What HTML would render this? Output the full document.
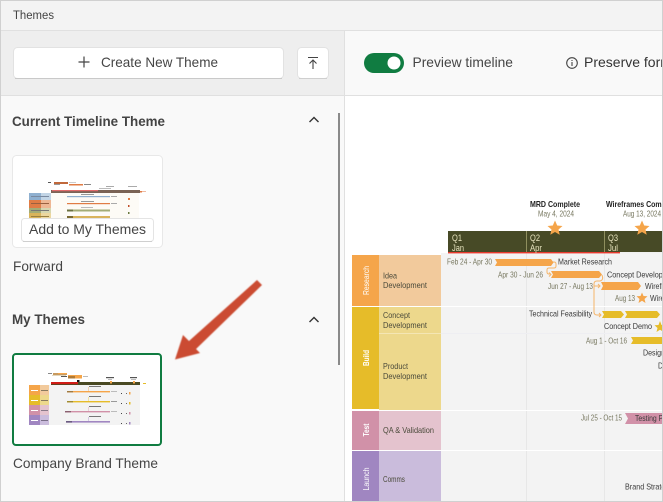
<!DOCTYPE html>
<html><head><meta charset="utf-8"><title>Themes</title>
<style>
html,body{margin:0;padding:0;background:#fff;overflow:hidden}
svg{display:block}
text{font-family:"Liberation Sans",sans-serif}
.u{font-size:14px;fill:#454545}
.h{font-size:14px;font-weight:bold;fill:#444}
.s{font-size:8.5px;fill:#4a4a3a}
.d{font-size:8px;fill:#77775f}
.t{font-size:8.5px;fill:#3a3a3a}
.w{font-size:8.5px;fill:#fff}
.q{font-size:9.5px;fill:#e6e3bd}
.gt text{filter:url(#tb)}
</style></head>
<body>
<svg xmlns="http://www.w3.org/2000/svg" width="663" height="502" viewBox="0 0 663 502">
<defs>
<filter id="b" x="-10%" y="-10%" width="120%" height="120%"><feGaussianBlur stdDeviation="0.4"/></filter>
<filter id="tb" x="-5%" y="-20%" width="110%" height="140%"><feGaussianBlur stdDeviation="0.22"/></filter>
<filter id="th" x="-2%" y="-2%" width="104%" height="104%"><feGaussianBlur stdDeviation="0.3"/></filter>
<clipPath id="c"><rect x="345" y="31" width="317" height="470"/></clipPath>
</defs>
<!-- panels -->
<rect width="663" height="502" fill="#fff"/>
<rect x="0" y="0" width="663" height="31" fill="#f3f3f3"/>
<rect x="0" y="31" width="345" height="64" fill="#eeeeee"/>
<rect x="0" y="96" width="345" height="406" fill="#f9f9f9"/>
<rect x="345" y="31" width="318" height="64" fill="#f9f9f9"/>
<rect x="0" y="30" width="663" height="1" fill="#e0e0e0"/>
<rect x="0" y="95" width="663" height="1" fill="#e0e0e0"/>
<rect x="344" y="31" width="1" height="471" fill="#e0e0e0"/>
<text x="13" y="19" style="font-size:11.5px;fill:#444" textLength="41" lengthAdjust="spacingAndGlyphs">Themes</text>
<!-- buttons -->
<rect x="13.5" y="47.5" width="270" height="31" rx="4" fill="#fff" stroke="#e2e2e2"/>
<path d="M15 78.5H282" stroke="#c9c9c9"/>
<path d="M84 56.5V67.5M78.5 62H89.5" stroke="#444" stroke-width="1.2" fill="none"/>
<text x="101" y="67" class="u" textLength="117" lengthAdjust="spacingAndGlyphs">Create New Theme</text>
<rect x="297.5" y="47.5" width="31" height="31" rx="4" fill="#fff" stroke="#e2e2e2"/>
<path d="M299 78.5H327" stroke="#cfcfcf"/>
<path d="M308 57.5H318M313 69V60.5M309.5 63.5L313 60L316.5 63.5" stroke="#444" stroke-width="1.1" fill="none"/>
<!-- left -->
<text x="12" y="126" class="h" textLength="153" lengthAdjust="spacingAndGlyphs">Current Timeline Theme</text>
<path d="M309.5 122L314 117.5L318.5 122" stroke="#333" stroke-width="1.4" fill="none"/>
<rect x="338" y="113" width="2" height="252" fill="#8a8a8a"/>
<!-- card 1 -->
<rect x="12.5" y="155.5" width="150" height="92" rx="4" fill="#fff" stroke="#e8e8e8"/>
<g filter="url(#th)">
<rect x="48" y="182" width="3" height="1" fill="#555"/>
<rect x="54" y="182" width="14" height="2" fill="#c0673a"/>
<rect x="69" y="182" width="7" height="1" fill="#ccc"/>
<rect x="54" y="184" width="6" height="1" fill="#999"/>
<rect x="69" y="184" width="14" height="1.5" fill="#e07b45"/>
<rect x="84" y="184" width="7" height="1" fill="#888"/>
<rect x="106" y="186" width="8" height="1" fill="#aaa"/>
<rect x="128" y="186" width="9" height="1" fill="#aaa"/>
<rect x="99" y="188" width="12" height="1" fill="#bbb"/>
<rect x="51" y="190" width="89" height="3" fill="#7a6355"/>
<rect x="52" y="190" width="46" height="1.2" fill="#e06a6a"/>
<rect x="140" y="191" width="2" height="1.5" fill="#e07b45"/>
<rect x="142" y="191" width="4" height="1" fill="#f0b9a0"/>
<rect x="51" y="193" width="88" height="26" fill="#fdfbf6"/>
<rect x="29" y="193" width="12" height="7" fill="#8fb0d0"/><rect x="41" y="193" width="10" height="7" fill="#c2d5e6"/>
<rect x="29" y="200" width="12" height="8" fill="#e07b45"/><rect x="41" y="200" width="10" height="8" fill="#eeb794"/>
<rect x="29" y="208" width="12" height="5" fill="#a3ac76"/><rect x="41" y="208" width="10" height="5" fill="#d6d6b0"/>
<rect x="29" y="213" width="12" height="6" fill="#d9b45b"/><rect x="41" y="213" width="10" height="6" fill="#ecd79f"/>
<rect x="31" y="196" width="18" height="1" fill="#7a8aa0"/><rect x="31" y="203" width="18" height="1" fill="#9a6040"/><rect x="31" y="210" width="18" height="1" fill="#777"/><rect x="31" y="216" width="18" height="1" fill="#9a8040"/>
<rect x="67" y="196" width="43" height="1.2" fill="#8fb0d0"/><rect x="111" y="196" width="6" height="1" fill="#aaa"/>
<rect x="67" y="203" width="43" height="1.2" fill="#e07b45"/><rect x="111" y="203" width="6" height="1" fill="#aaa"/>
<rect x="67" y="209.5" width="43" height="2" fill="#a3ac76"/><rect x="67" y="209.5" width="6" height="2" fill="#6a7040"/>
<rect x="67" y="216" width="43" height="2" fill="#d9b45b"/><rect x="67" y="216" width="6" height="2" fill="#7a6a30"/>
<rect x="81" y="194" width="13" height="1" fill="#999"/><rect x="81" y="201" width="13" height="1" fill="#999"/><rect x="81" y="207" width="12" height="1" fill="#bbb"/>
<rect x="128" y="198" width="2" height="2" fill="#e07b45"/><rect x="128" y="205" width="1.5" height="2" fill="#c0502a"/><rect x="128" y="212" width="1.5" height="2" fill="#6a7a40"/>
</g>
<rect x="21.5" y="218.5" width="132" height="23" rx="3" fill="#fff" stroke="#e4e4e4"/>
<path d="M23 241.5H152" stroke="#cfcfcf"/>
<text x="29" y="234" class="u" textLength="117" lengthAdjust="spacingAndGlyphs">Add to My Themes</text>
<text x="13" y="271" class="u" textLength="50" lengthAdjust="spacingAndGlyphs">Forward</text>
<text x="12" y="324" class="h" textLength="73" lengthAdjust="spacingAndGlyphs">My Themes</text>
<path d="M309.5 322L314 317.5L318.5 322" stroke="#333" stroke-width="1.4" fill="none"/>
<!-- card 2 -->
<rect x="13" y="354" width="148" height="91" rx="3" fill="#fff" stroke="#107c41" stroke-width="2"/>
<g filter="url(#th)">
<rect x="48" y="373" width="4" height="1" fill="#888"/>
<rect x="53" y="373" width="14" height="2" fill="#c79a60"/>
<rect x="58" y="373" width="9" height="1" fill="#f5a54a"/>
<rect x="52" y="375" width="14" height="1" fill="#e2d6bd"/>
<rect x="61" y="376" width="6" height="1" fill="#555"/>
<rect x="68" y="375" width="14" height="3.5" fill="#f5a54a"/>
<rect x="68" y="376" width="7" height="2.5" fill="#b07a36"/>
<rect x="83" y="376" width="5" height="1" fill="#bbb"/>
<rect x="106" y="377" width="8" height="1.2" fill="#555"/>
<rect x="130" y="377" width="7" height="1.2" fill="#555"/>
<rect x="108" y="379" width="4" height="1" fill="#bbb"/><rect x="131" y="379" width="5" height="1" fill="#bbb"/>
<rect x="77" y="380" width="2.5" height="2" fill="#111"/>
<rect x="51" y="382" width="89" height="3" fill="#4a4a22"/>
<rect x="51" y="382" width="27" height="2.2" fill="#d01c12"/>
<rect x="110" y="381" width="2" height="2.5" fill="#f5a54a"/><rect x="133" y="381" width="2" height="2.5" fill="#f5a54a"/>
<rect x="143" y="383" width="3" height="1" fill="#e6bc29"/>
<rect x="49" y="385" width="91" height="40" fill="#f3f3f3"/>
<rect x="29" y="385" width="11" height="10" fill="#f5a54a"/><rect x="40" y="385" width="9" height="10" fill="#f2ca9c"/>
<rect x="29" y="395" width="11" height="10" fill="#e6bc29"/><rect x="40" y="395" width="9" height="10" fill="#edd88c"/>
<rect x="29" y="405" width="11" height="10" fill="#d191a8"/><rect x="40" y="405" width="9" height="10" fill="#e4c3ce"/>
<rect x="29" y="415" width="11" height="10" fill="#a086c1"/><rect x="40" y="415" width="9" height="10" fill="#cabcdc"/>
<rect x="31" y="390" width="7" height="1" fill="#fff"/><rect x="31" y="400" width="7" height="1" fill="#fff"/><rect x="31" y="410" width="7" height="1" fill="#fff"/><rect x="31" y="420" width="7" height="1" fill="#fff"/>
<rect x="41" y="390" width="7" height="1" fill="#8a7a5e"/><rect x="41" y="400" width="7" height="1" fill="#8a7a5e"/><rect x="41" y="410" width="7" height="1" fill="#8a7a8a"/><rect x="41" y="420" width="7" height="1" fill="#7a6e88"/>
<rect x="67" y="391" width="43" height="1.4" fill="#f5a54a"/><rect x="67" y="391" width="6" height="1.4" fill="#a07a40"/>
<rect x="67" y="401" width="43" height="1.4" fill="#e6bc29"/><rect x="67" y="401" width="6" height="1.4" fill="#a08a30"/>
<rect x="65" y="411" width="45" height="1.4" fill="#d191a8"/><rect x="65" y="411" width="6" height="1.4" fill="#8a6070"/>
<rect x="66" y="421" width="44" height="1.6" fill="#a086c1"/><rect x="66" y="421" width="6" height="1.6" fill="#6a5a80"/>
<rect x="89" y="386" width="12" height="1" fill="#777"/><rect x="89" y="396" width="12" height="1" fill="#777"/><rect x="89" y="406" width="12" height="1" fill="#777"/><rect x="89" y="416" width="12" height="1" fill="#777"/>
<rect x="88" y="387" width="1" height="4" fill="#f2d2b0"/><rect x="88" y="397" width="1" height="4" fill="#f2e2a0"/><rect x="88" y="407" width="1" height="4" fill="#e8cdd8"/><rect x="88" y="417" width="1" height="4" fill="#d4c8e4"/>
<rect x="111" y="391" width="6" height="1" fill="#bbb"/><rect x="111" y="401" width="6" height="1" fill="#999"/><rect x="111" y="411" width="6" height="1" fill="#bbb"/>
<rect x="121" y="393" width="1" height="1" fill="#444"/><rect x="126" y="393" width="1" height="1" fill="#666"/><rect x="129" y="392" width="1.5" height="2.5" fill="#f5a54a"/>
<rect x="121" y="403" width="1" height="1" fill="#444"/><rect x="126" y="403" width="1" height="1" fill="#666"/><rect x="129" y="402" width="1.5" height="2.5" fill="#e6bc29"/>
<rect x="121" y="413" width="1" height="1" fill="#444"/><rect x="126" y="413" width="1" height="1" fill="#666"/><rect x="129" y="412" width="1.5" height="2.5" fill="#d191a8"/>
<rect x="121" y="423" width="1" height="1" fill="#444"/><rect x="126" y="423" width="1" height="1" fill="#666"/><rect x="129" y="422" width="1.5" height="2.5" fill="#a086c1"/>
</g>
<text x="13" y="468" class="u" textLength="145" lengthAdjust="spacingAndGlyphs">Company Brand Theme</text>
<!-- toolbar right -->
<rect x="364" y="53" width="40" height="20" rx="10" fill="#107c41"/>
<circle cx="394" cy="63" r="6.5" fill="#fff"/>
<text x="412.5" y="67" class="u" textLength="100.5" lengthAdjust="spacingAndGlyphs">Preview timeline</text>
<circle cx="572" cy="63" r="5.3" fill="none" stroke="#444" stroke-width="1.1"/>
<path d="M572 62V66M572 60V61" stroke="#444" stroke-width="1.1"/>
<g clip-path="url(#c)" class="gt">
<text x="584" y="67" class="u" style="fill:#333;filter:none">Preserve formatting</text>
<!-- gantt -->
<rect x="441" y="253" width="222" height="248" fill="#f3f3f3"/>
<rect x="526" y="253" width="1" height="248" fill="#e7e7e7"/>
<rect x="604" y="253" width="1" height="248" fill="#e7e7e7"/>
<rect x="441" y="306" width="222" height="1" fill="#fff"/>
<rect x="441" y="333" width="222" height="1" fill="#eeeef2"/>
<rect x="441" y="410" width="222" height="1" fill="#fff"/>
<rect x="441" y="450" width="222" height="1" fill="#fff"/>
<rect x="352" y="255" width="27" height="51" fill="#f5a54a"/><rect x="379" y="255" width="62" height="51" fill="#f2ca9c"/>
<rect x="352" y="307" width="27" height="102" fill="#e6bc29"/><rect x="379" y="307" width="62" height="103" fill="#edd88c"/>
<rect x="379" y="333" width="62" height="1" fill="#f4e6b4"/>
<rect x="352" y="411" width="27" height="39" fill="#d191a8"/><rect x="379" y="411" width="62" height="39" fill="#e4c3ce"/>
<rect x="352" y="451" width="27" height="50" fill="#a086c1"/><rect x="379" y="451" width="62" height="50" fill="#cabcdc"/>
<text class="w" transform="translate(369,295) rotate(-90)" textLength="29" lengthAdjust="spacingAndGlyphs">Research</text>
<text class="w" style="font-weight:bold" transform="translate(369,366) rotate(-90)" textLength="16" lengthAdjust="spacingAndGlyphs">Build</text>
<text class="w" style="font-weight:bold" transform="translate(369,436.5) rotate(-90)" textLength="13" lengthAdjust="spacingAndGlyphs">Test</text>
<text class="w" transform="translate(369,490.5) rotate(-90)" textLength="23" lengthAdjust="spacingAndGlyphs">Launch</text>
<text x="383" y="278.5" class="s" textLength="14" lengthAdjust="spacingAndGlyphs">Idea</text>
<text x="383" y="288" class="s" textLength="44" lengthAdjust="spacingAndGlyphs">Development</text>
<text x="383" y="318" class="s" textLength="27" lengthAdjust="spacingAndGlyphs">Concept</text>
<text x="383" y="328" class="s" textLength="44" lengthAdjust="spacingAndGlyphs">Development</text>
<text x="383" y="369" class="s" textLength="25" lengthAdjust="spacingAndGlyphs">Product</text>
<text x="383" y="379" class="s" textLength="44" lengthAdjust="spacingAndGlyphs">Development</text>
<text x="383" y="433" class="s" textLength="51" lengthAdjust="spacingAndGlyphs">QA &amp; Validation</text>
<text x="383" y="482" class="s" textLength="22" lengthAdjust="spacingAndGlyphs">Comms</text>
<rect x="448" y="231" width="215" height="21" fill="#474a26"/>
<rect x="448" y="252" width="172" height="1.4" fill="#e83a2e"/>
<rect x="620" y="252" width="43" height="1.4" fill="#f0f0f0"/>
<rect x="526" y="231" width="1" height="21" fill="#8f8f5e"/><rect x="604" y="231" width="1" height="21" fill="#8f8f5e"/>
<text x="452" y="241" class="q" textLength="10" lengthAdjust="spacingAndGlyphs">Q1</text><text x="452" y="251" class="q" textLength="12" lengthAdjust="spacingAndGlyphs">Jan</text>
<text x="530" y="241" class="q" textLength="10" lengthAdjust="spacingAndGlyphs">Q2</text><text x="530" y="251" class="q" textLength="12" lengthAdjust="spacingAndGlyphs">Apr</text>
<text x="608" y="241" class="q" textLength="10" lengthAdjust="spacingAndGlyphs">Q3</text><text x="608" y="251" class="q" textLength="10" lengthAdjust="spacingAndGlyphs">Jul</text>
<text x="530" y="207" class="t" style="font-weight:bold;fill:#222" textLength="50" lengthAdjust="spacingAndGlyphs">MRD Complete</text>
<text x="538" y="216.5" class="d" textLength="36" lengthAdjust="spacingAndGlyphs">May 4, 2024</text>
<text x="606" y="207" class="t" style="font-weight:bold;fill:#222" textLength="72" lengthAdjust="spacingAndGlyphs">Wireframes Complete</text>
<text x="623" y="216.5" class="d" textLength="38" lengthAdjust="spacingAndGlyphs">Aug 13, 2024</text>
<polygon points="555,220.5 557.2,225.5 562.5,226 558.5,229.5 559.7,234.7 555,232 550.3,234.7 551.5,229.5 547.5,226 552.8,225.5" fill="#f5a54a"/>
<polygon points="642,220.5 644.2,225.5 649.5,226 645.5,229.5 646.7,234.7 642,232 637.3,234.7 638.5,229.5 634.5,226 639.8,225.5" fill="#f5a54a"/>
<path d="M552 262H554Q556 262 556 264V266Q556 268 554 268H549Q547 268 547 270V272Q547 274 549 274H551M549 272.5L551 274.5L549 276.5" fill="none" stroke="#f5b56a" stroke-width="1"/>
<path d="M602 275Q604 280 600 281H597Q594 281 594 284V312Q594 315 597 315H601M594 286H600M598 284L600 286L598 288M599 313L601 315L599 317" fill="none" stroke="#f5b56a" stroke-width="1"/>
<polygon points="495,259 551,259 553.5,262.5 551,266 495,266 497,262.5" fill="#f5a54a"/>
<polygon points="551,271 599,271 602,274.5 599,278 551,278 553,274.5" fill="#f5a54a"/>
<polygon points="601,282 638,282 641,286 638,290 601,290 603,286" fill="#f5a54a"/>
<polygon points="602,311 621,311 624,314.5 621,318 602,318 604,314.5" fill="#e6bc29"/>
<polygon points="625,311 657,311 660,314.5 657,318 625,318 627,314.5" fill="#e6bc29"/>
<polygon points="631,337 663,337 663,344 631,344 633,340.5" fill="#e6bc29"/>
<polygon points="625,413 663,413 663,424 625,424 628,418.5" fill="#d191a8"/>
<polygon points="642,292.5 643.5,296 647.5,296.3 644.5,299 645.5,303 642,300.8 638.5,303 639.5,299 636.5,296.3 640.5,296" fill="#f5a54a"/>
<polygon points="660,321 661.5,325 665.5,325.3 662.5,328 663.5,332 660,329.8 656.5,332 657.5,328 654.5,325.3 658.5,325" fill="#e6bc29"/>
<text x="447" y="264.5" class="d" textLength="45" lengthAdjust="spacingAndGlyphs">Feb 24 - Apr 30</text>
<text x="498" y="277.5" class="d" textLength="45" lengthAdjust="spacingAndGlyphs">Apr 30 - Jun 26</text>
<text x="548" y="289" class="d" textLength="45" lengthAdjust="spacingAndGlyphs">Jun 27 - Aug 13</text>
<text x="615" y="301" class="d" textLength="20" lengthAdjust="spacingAndGlyphs">Aug 13</text>
<text x="586" y="343.5" class="d" textLength="41" lengthAdjust="spacingAndGlyphs">Aug 1 - Oct 16</text>
<text x="581" y="420.5" class="d" textLength="41" lengthAdjust="spacingAndGlyphs">Jul 25 - Oct 15</text>
<text x="558" y="264.5" class="t" textLength="54" lengthAdjust="spacingAndGlyphs">Market Research</text>
<text x="607" y="277.5" class="t" textLength="72" lengthAdjust="spacingAndGlyphs">Concept Development</text>
<text x="645" y="289" class="t" textLength="36" lengthAdjust="spacingAndGlyphs">Wireframes</text>
<text x="650" y="301" class="t" textLength="36" lengthAdjust="spacingAndGlyphs">Wireframes</text>
<text x="529" y="316.5" class="t" textLength="63" lengthAdjust="spacingAndGlyphs">Technical Feasibility</text>
<text x="604" y="329" class="t" textLength="48" lengthAdjust="spacingAndGlyphs">Concept Demo</text>
<text x="643" y="355.5" class="t" textLength="22" lengthAdjust="spacingAndGlyphs">Design</text>
<text x="658" y="368.5" class="t" textLength="22" lengthAdjust="spacingAndGlyphs">Design</text>
<text x="635" y="421" class="t" textLength="43" lengthAdjust="spacingAndGlyphs">Testing Phase</text>
<text x="625" y="489.5" class="t" textLength="48" lengthAdjust="spacingAndGlyphs">Brand Strategy</text>
</g>
<!-- window border -->
<rect x="0" y="0" width="663" height="1" fill="#d0d0d0"/>
<rect x="0" y="0" width="1" height="502" fill="#d0d0d0"/>
<rect x="662" y="0" width="1" height="502" fill="#d0d0d0"/>
<rect x="0" y="501" width="663" height="1" fill="#d0d0d0"/>
<!-- arrow -->
<polygon points="257,280 262,285 196,349 200,353 175,359.5 183,335 189,341" fill="#cb4c32" filter="url(#b)"/>
</svg>
</body></html>
